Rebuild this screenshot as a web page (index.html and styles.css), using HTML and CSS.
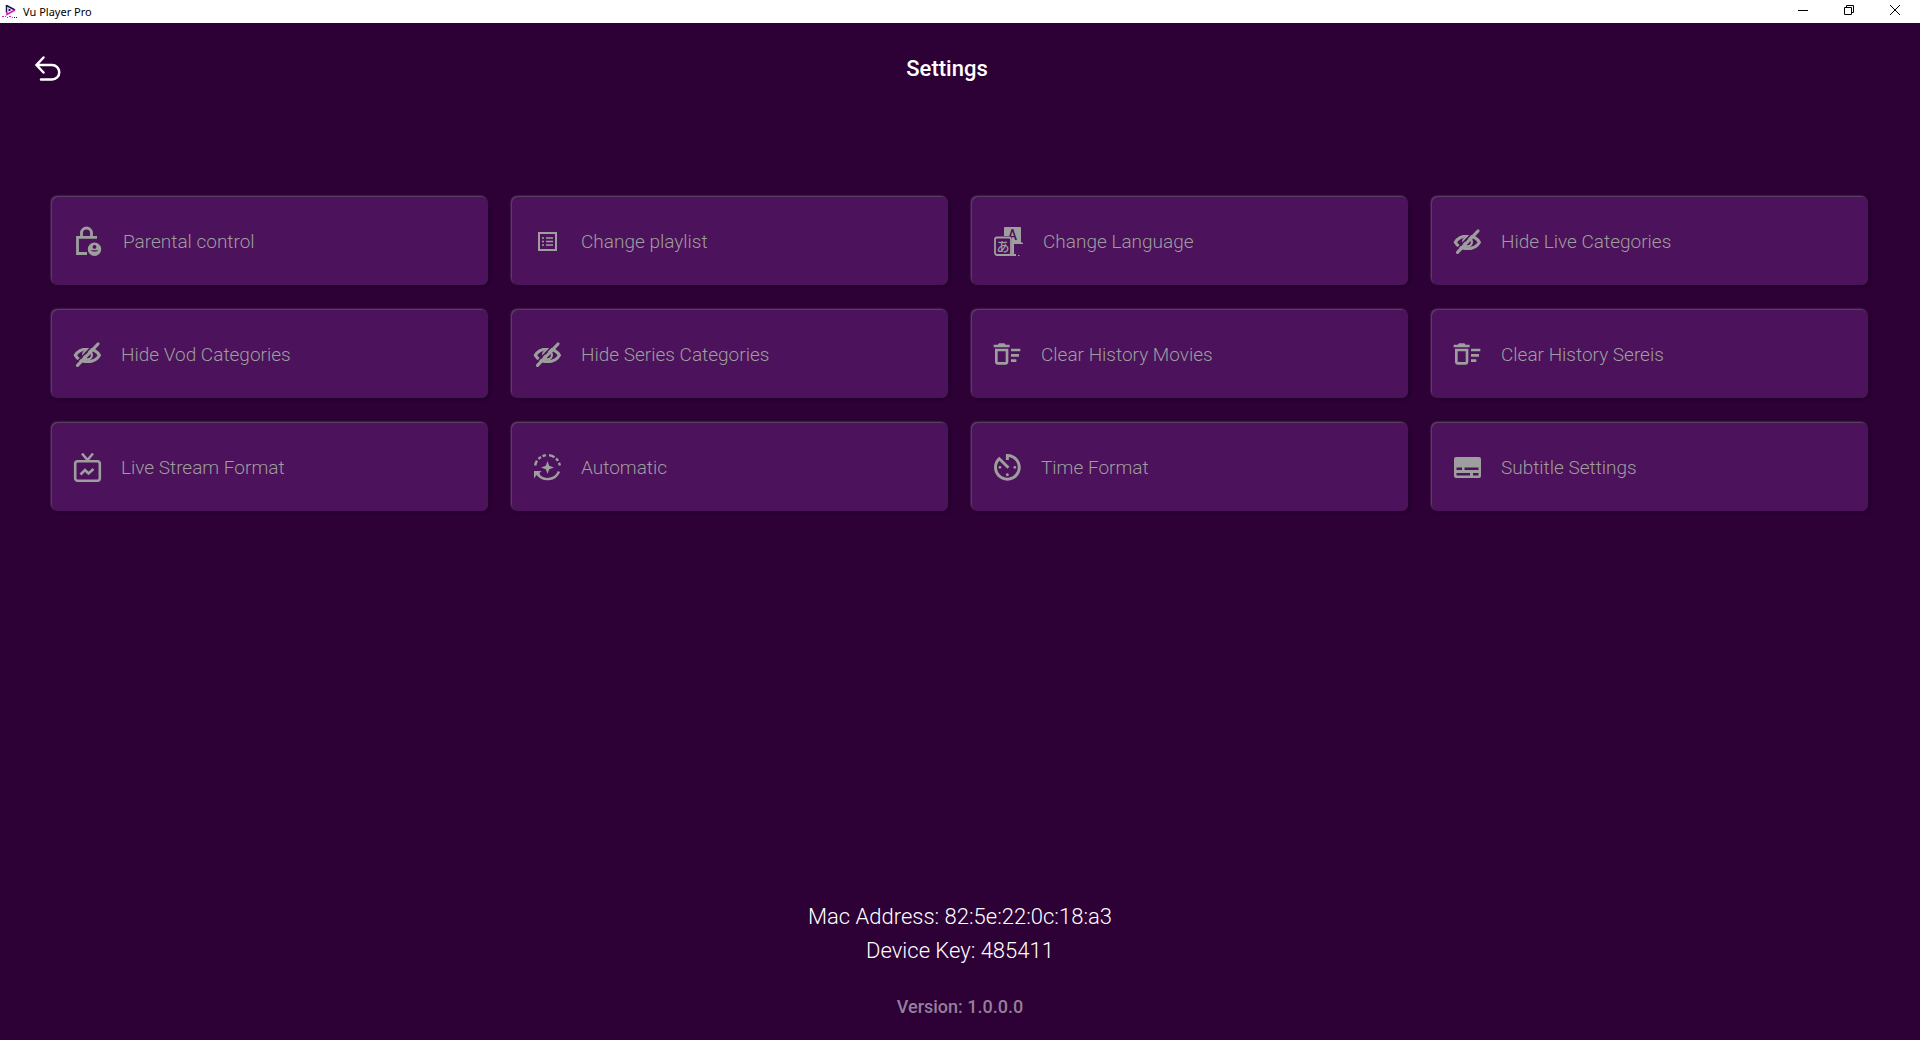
FILE: index.html
```
<!DOCTYPE html>
<html lang="en">
<head>
    <meta charset="UTF-8">
    <meta name="viewport" content="width=device-width, initial-scale=1.0">
    <title>Vu Player Pro</title>
    <link rel="stylesheet" href="styles.css">
</head>
<body>
<!-- Shared icons -->
<svg class="sprite" aria-hidden="true">
    <symbol id="icon-hide" viewBox="0 0 32 32">
        <mask id="hide-mask">
            <rect width="32" height="32" fill="#fff"/>
            <path d="M4.500 25.500L25.500 3.500" stroke="#000" stroke-width="1.500"/>
        </mask>
        <g fill="none" stroke="currentColor" mask="url(#hide-mask)">
            <path d="M4.300 17.300C9 8.800 24 8.800 28.400 17.300C24 25.800 9 25.800 4.300 17.300Z" stroke-width="3"/>
            <circle cx="16.500" cy="17" r="4.400" stroke-width="2.200"/>
            <path d="M13.500 14.500v4" stroke-width="1.500"/>
        </g>
        <path d="M6.500 27.300L27 6" fill="none" stroke="currentColor" stroke-width="3.200" stroke-linecap="round"/>
    </symbol>
    <symbol id="icon-clear" viewBox="0 0 24 24">
        <path fill="currentColor" d="M15 16h4v2h-4zm0-8h7v2h-7zm0 4h6v2h-6zM3 18c0 1.100.9 2 2 2h6c1.100 0 2-.9 2-2V8H3v10zm2-8h6v8H5v-8zm5-6H6L5 5H2v2h12V5h-3z"/>
    </symbol>
</svg>

<div class="titlebar">
    <svg class="app-logo" viewBox="0 0 16 16">
        <path d="M4.500 1v7.500" fill="none" stroke="#1d1450" stroke-width="1.500"/>
        <path d="M4.500 1.500L13 6" fill="none" stroke="#1d1450" stroke-width="1.500"/>
        <path d="M13 6L5 10.500V8" fill="none" stroke="#d414c8" stroke-width="1.500"/>
        <path d="M6.500 4.500v3l3-1.500z" fill="#1d1450"/>
        <path d="M0 12.500h2m1 0h1m1 1h1m1-1h2m1 1h1" fill="none" stroke="#e020d8"/>
        <path d="M12 13.500h1m1 0h1" fill="none" stroke="#1d1450"/>
    </svg>
    <span class="titlebar-text">Vu Player Pro</span>
    <div class="window-buttons">
        <button class="window-button" aria-label="Minimize">
            <svg viewBox="0 0 12 12"><path d="M1 6.500h10"/></svg>
        </button>
        <button class="window-button" aria-label="Restore">
            <svg viewBox="0 0 12 12"><path d="M1.500 3.500h7v7h-7zM3.500 3V1.500h7v7H9"/></svg>
        </button>
        <button class="window-button" aria-label="Close">
            <svg viewBox="0 0 12 12"><path d="M1 1l10 10M11 1L1 11"/></svg>
        </button>
    </div>
</div>

<div class="page">
    <header class="header">
        <button class="back-button" aria-label="Back">
            <svg viewBox="0 0 32 32"><path d="M11.500 4.500L4.500 12l7 7.500M4.500 12H20a7 7 0 0 1 0 14.500H9"/></svg>
        </button>
        <h1>Settings</h1>
    </header>

    <main class="settings-grid">
        <button class="card">
            <svg class="icon icon-wide" viewBox="0 0 34 32">
                <path d="M10.500 12V8a5 5 0 0 1 10 0v4M26 12.300H6.500v16.200H16" fill="none" stroke="currentColor" stroke-width="2.800"/>
                <path fill="currentColor" fill-rule="evenodd" d="M23.500 17.500a6.700 6.700 0 1 0 0 13.400a6.700 6.700 0 1 0 0-13.400zM23.500 20a1.900 1.900 0 1 1 0 3.800a1.900 1.900 0 1 1 0-3.800zM19.800 25.200h7.400c-.5 1.800-6.900 1.800-7.400 0z"/>
            </svg>
            <span>Parental control</span>
        </button>
        <button class="card">
            <svg class="icon" viewBox="0 0 32 32">
                <path d="M8 8h17v17H8z" fill="none" stroke="currentColor" stroke-width="2"/>
                <path d="M11 13h2M15 13h7M11 16.500h2M15 16.500h7M11 20h2M15 20h7" fill="none" stroke="currentColor" stroke-width="1.500"/>
            </svg>
            <span>Change playlist</span>
        </button>
        <button class="card">
            <svg class="icon icon-wide" viewBox="0 0 34 32">
                <path fill="currentColor" d="M14 2h15q1 0 1 1v14l2 1v1h-9v10h2v2h-6v-1l2-1V12q0-1-1-1h-7V3q0-1 1-1z"/>
                <text class="icon-letter" x="21.500" y="15" font-size="14">A</text>
                <rect x="4" y="12.500" width="16" height="17.500" rx="2" fill="none" stroke="currentColor" stroke-width="1.800"/>
                <text class="icon-kana" x="12" y="26" font-size="13">あ</text>
                <path fill="currentColor" d="M27 30h1.500v1H27z"/>
            </svg>
            <span>Change Language</span>
        </button>
        <button class="card">
            <svg class="icon"><use href="#icon-hide"/></svg>
            <span>Hide Live Categories</span>
        </button>

        <button class="card">
            <svg class="icon"><use href="#icon-hide"/></svg>
            <span>Hide Vod Categories</span>
        </button>
        <button class="card">
            <svg class="icon"><use href="#icon-hide"/></svg>
            <span>Hide Series Categories</span>
        </button>
        <button class="card">
            <svg class="icon"><use href="#icon-clear"/></svg>
            <span>Clear History Movies</span>
        </button>
        <button class="card">
            <svg class="icon"><use href="#icon-clear"/></svg>
            <span>Clear History Sereis</span>
        </button>

        <button class="card">
            <svg class="icon" viewBox="0 0 32 32">
                <g fill="none" stroke="currentColor" stroke-width="2.600">
                    <rect x="4.200" y="10.200" width="24.600" height="19.600" rx="2.500"/>
                    <path d="M11 2.500l5.500 6.500L22 2.500"/>
                    <path d="M9.500 23.500l4.500-4.500 3.500 3.500 5-4.500"/>
                </g>
            </svg>
            <span>Live Stream Format</span>
        </button>
        <button class="card">
            <svg class="icon" viewBox="0 0 32 32">
                <g fill="none" stroke="currentColor" stroke-width="2.400">
                    <path d="M4.200 14.500A12.400 12.400 0 0 1 6 9.700M7.500 8A12.400 12.400 0 0 1 10 6M11.500 5.200A12.400 12.400 0 0 1 15 4.100M18 4.100A12.400 12.400 0 0 1 23.500 6.200M25 7.500A12.400 12.400 0 0 1 27 9.900M28 11.800A12.400 12.400 0 0 1 28.800 14.500"/>
                    <path d="M28 20.500A12.400 12.400 0 0 1 6.500 23"/>
                </g>
                <path fill="currentColor" d="M3 20h7.500l-2 2 .5 1.500-2 1.500-1.500-1L3 27.500zM16.500 10l1.700 4.800 4.800 1.700-4.800 1.700-1.700 4.800-1.700-4.800L10 16.500l4.800-1.700z"/>
            </svg>
            <span>Automatic</span>
        </button>
        <button class="card">
            <svg class="icon" viewBox="1 1 21.500 21.500">
                <path fill="currentColor" d="M11 17c0 .55.45 1 1 1s1-.45 1-1-.45-1-1-1-1 .45-1 1zm0-14v4h2V5.080c3.390.49 6 3.390 6 6.920 0 3.870-3.130 7-7 7s-7-3.130-7-7c0-1.680.59-3.220 1.580-4.420L12 13l1.410-1.410-6.800-6.800v.02C4.420 6.450 3 9.050 3 12c0 4.970 4.020 9 9 9 4.970 0 9-4.030 9-9s-4.030-9-9-9h-1zm7 9c0-.55-.45-1-1-1s-1 .45-1 1 .45 1 1 1 1-.45 1-1zM6 12c0 .55.45 1 1 1s1-.45 1-1-.45-1-1-1-1 .45-1 1z"/>
            </svg>
            <span>Time Format</span>
        </button>
        <button class="card">
            <svg class="icon" viewBox="0 0 32 32">
                <path fill="currentColor" fill-rule="evenodd" d="M5 6h23q2 0 2 2v17q0 2-2 2H5q-2 0-2-2V8q0-2 2-2zM5.500 16.500v2.500H11v-2.500zM13.500 16.500v2.500H27.500v-2.500zM5.500 22v2.500H19V22zM22 22v2.500h5.500V22z"/>
            </svg>
            <span>Subtitle Settings</span>
        </button>
    </main>

    <footer class="footer">
        <p>Mac Address: 82:5e:22:0c:18:a3</p>
        <p>Device Key: 485411</p>
        <p class="version">Version: 1.0.0.0</p>
    </footer>
</div>
</body>
</html>
```
FILE: styles.css
```
* {
    box-sizing: border-box;
}

body {
    margin: 0;
    min-height: 100vh;
    display: flex;
    flex-direction: column;
    background-color: #2d0036;
    color: #fff;
    font-family: Roboto, sans-serif;
}

button {
    margin: 0;
    padding: 0;
    border: none;
    background: none;
    color: inherit;
    font-family: inherit;
    cursor: pointer;
}

.sprite {
    position: absolute;
    width: 0;
    height: 0;
}

.titlebar {
    display: flex;
    align-items: center;
    height: 23px;
    padding: 0 2px;
    background-color: #fff;
    color: #000;
}

.app-logo {
    width: 16px;
    height: 16px;
    margin-right: 5px;
}

.titlebar-text {
    font-family: "Noto Sans", sans-serif;
    font-size: 11px;
}

.window-buttons {
    display: flex;
    margin-left: auto;
}

.window-button {
    display: flex;
    align-items: center;
    justify-content: center;
    width: 46px;
    height: 23px;
}

.window-button svg {
    width: 12px;
    height: 12px;
    margin-bottom: 3px;
    fill: none;
    stroke: #000;
}

.page {
    flex: 1;
    display: flex;
    flex-direction: column;
}

.header {
    display: grid;
    grid-template-columns: 1fr auto 1fr;
    align-items: center;
    height: 91px;
    padding: 0 58px 0 32px;
}

.back-button {
    width: 32px;
    height: 32px;
}

.back-button svg {
    display: block;
    fill: none;
    stroke: #fff;
    stroke-width: 2.500;
    stroke-linecap: round;
}

h1 {
    margin: 0;
    font-size: 22px;
    font-weight: 500;
}

.settings-grid {
    display: grid;
    grid-template-columns: repeat(4, 1fr);
    gap: 25px 24px;
    padding: 83px 52px 0;
}

.card {
    display: flex;
    align-items: center;
    gap: 18px;
    height: 88px;
    padding: 0 19px;
    border-radius: 6px;
    background-color: #4c125b;
    box-shadow: -1px -1px 2px #6b5470, 1px 1px 3px #1c0024;
    color: #9e9e9e;
    font-size: 19px;
    font-weight: 300;
    text-align: left;
}

.icon {
    flex-shrink: 0;
    width: 32px;
    height: 32px;
}

.icon-wide {
    width: 34px;
}

.icon-letter {
    fill: #4c125b;
    font-weight: 500;
    text-anchor: middle;
}

.icon-kana {
    fill: currentColor;
    font-family: "Noto Sans CJK JP", sans-serif;
    font-weight: 500;
    text-anchor: middle;
}

.footer {
    margin-top: auto;
    padding-bottom: 16px;
    text-align: center;
    font-size: 22px;
    font-weight: 300;
    line-height: 34px;
}

.footer p {
    margin: 0;
}

.footer .version {
    margin-top: 22px;
    color: #957f9a;
    font-size: 18px;
    font-weight: 500;
}
```
